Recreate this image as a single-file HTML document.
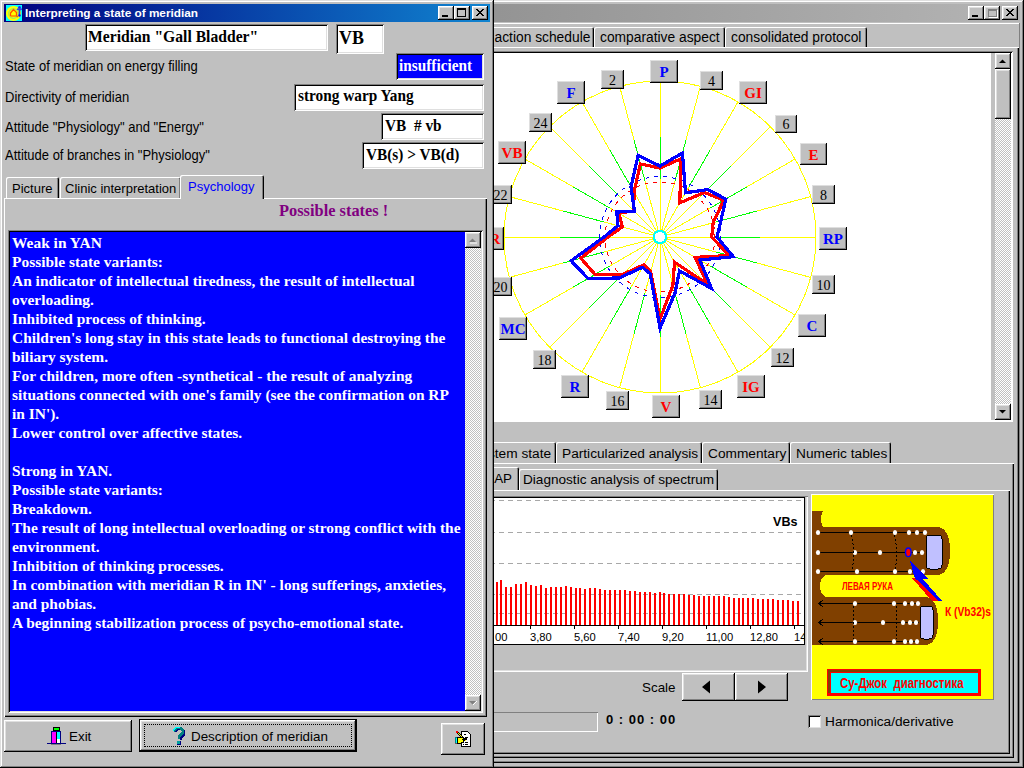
<!DOCTYPE html><html><head><meta charset="utf-8"><style>
*{box-sizing:border-box;margin:0;padding:0}
html,body{width:1024px;height:768px;overflow:hidden;background:#c0c0c0}
body{position:relative;font-family:"Liberation Sans",sans-serif;font-size:13px;color:#000}
.a{position:absolute}
.win{box-shadow:inset -1px -1px #000,inset 1px 1px #dfdfdf,inset -2px -2px #808080,inset 2px 2px #fff;background:#c0c0c0}
.btn{box-shadow:inset -1px -1px #000,inset 1px 1px #fff,inset -2px -2px #808080,inset 2px 2px #dfdfdf;background:#c0c0c0}
.sunk{box-shadow:inset 1px 1px #808080,inset -1px -1px #fff,inset 2px 2px #000,inset -2px -2px #dfdfdf}
.lbl{position:absolute;background:#c0c0c0;box-shadow:inset -1px -1px #000,inset 1px 1px #dfdfdf,inset -2px -2px #808080;text-align:center;font-family:"Liberation Serif",serif}
.lm{font-weight:bold;font-size:15px}
.ln{font-size:14px}
.t{white-space:pre;position:absolute}
.ser{font-family:"Liberation Serif",serif;font-weight:bold}
.tab{position:absolute;box-shadow:inset 1px 1px #fff,inset -1px 0 #000,inset -2px 0 #808080;background:#c0c0c0;border-radius:2px 2px 0 0}
.tbtn{position:absolute;width:16px;height:14px}
</style></head><body>
<div class="a win" style="left:380px;top:0;width:644px;height:768px"></div>
<div class="a" style="left:384px;top:4px;width:636px;height:18px;background:linear-gradient(90deg,#8d8d8d,#b4b4b4)"></div>
<div class="a btn" style="left:968px;top:6px;width:16px;height:14px"></div><div class="a btn" style="left:984px;top:6px;width:16px;height:14px"></div><div class="a btn" style="left:1002px;top:6px;width:16px;height:14px"></div><div class="a" style="left:972px;top:15px;width:6px;height:2px;background:#000"></div><div class="a" style="left:988px;top:9px;width:9px;height:8px;border:1px solid #808080;border-top-width:2px;box-shadow:1px 1px #fff"></div><svg class="a" style="left:1002px;top:6px" width="16" height="14"><path d="M4 3 L11 10 M5 3 L12 10 M11 3 L4 10 M12 3 L5 10" stroke="#000" stroke-width="1" shape-rendering="crispEdges"/></svg>
<div class="a" style="left:494px;top:23px;width:526px;height:1px;background:#fff"></div>
<div class="a" style="left:1019px;top:23px;width:1px;height:740px;background:#808080"></div>
<div class="a" style="left:494px;top:762px;width:526px;height:1px;background:#808080"></div>
<div class="a" style="left:470px;top:47px;width:549px;height:716px;box-shadow:inset 1px 1px #fff,inset -1px -1px #000,inset -2px -2px #808080"></div>
<div class="tab" style="left:480px;top:27px;width:114px;height:20px"></div>
<div class="t" style="left:494.5px;top:30px;font-size:13.8px">action schedule</div>
<div class="tab" style="left:594px;top:27px;width:131px;height:20px"></div>
<div class="t" style="left:600px;top:30px;font-size:13.8px">comparative aspect</div>
<div class="tab" style="left:725px;top:27px;width:142px;height:20px"></div>
<div class="t" style="left:731px;top:30px;font-size:13.8px">consolidated protocol</div>
<div class="a" style="left:470px;top:51px;width:543px;height:371px;background:#fff;box-shadow:inset 1px 1px #808080,inset -1px -1px #fff,inset 2px 2px #000,inset -2px -2px #fff"></div>
<div class="a" style="left:991px;top:53px;width:4px;height:367px;background:#c0c0c0"></div>
<div class="a" style="left:995px;top:53px;width:16px;height:367px;background-color:#e0e0e0;background-image:repeating-conic-gradient(#c0c0c0 0 25%,#fff 0 50%);background-size:2px 2px"></div>
<div class="a btn" style="left:995px;top:53px;width:16px;height:16px"></div>
<svg class="a" style="left:995px;top:53px" width="16" height="16"><path d="M4 10 H11 L7.5 6.5Z" fill="#000"/></svg>
<div class="a btn" style="left:995px;top:69px;width:16px;height:50px"></div>
<div class="a btn" style="left:995px;top:404px;width:16px;height:16px"></div>
<svg class="a" style="left:995px;top:404px" width="16" height="16"><path d="M4 6 H11 L7.5 9.5Z" fill="#000"/></svg>
<svg class="a" style="left:0;top:0" width="1024" height="768" viewBox="0 0 1024 768"><defs><clipPath id="cc"><rect x="472" y="53" width="519" height="367"/></clipPath></defs><g clip-path="url(#cc)" shape-rendering="crispEdges"><path d="M660.00,237.00 L660.00,179.00 M660.00,137.00 L660.00,81.00" stroke="#ffff00" stroke-width="1"/><path d="M660.00,179.00 L660.00,137.00" stroke="#00ff00" stroke-width="1"/><path d="M660.00,237.00 L675.01,180.98 M685.88,140.41 L700.38,86.32" stroke="#ffff00" stroke-width="1"/><path d="M675.01,180.98 L685.88,140.41" stroke="#00ff00" stroke-width="1"/><path d="M660.00,237.00 L689.00,186.77 M710.00,150.40 L738.00,101.90" stroke="#ffff00" stroke-width="1"/><path d="M689.00,186.77 L710.00,150.40" stroke="#00ff00" stroke-width="1"/><path d="M660.00,237.00 L701.01,195.99 M730.71,166.29 L770.31,126.69" stroke="#ffff00" stroke-width="1"/><path d="M701.01,195.99 L730.71,166.29" stroke="#00ff00" stroke-width="1"/><path d="M660.00,237.00 L710.23,208.00 M746.60,187.00 L795.10,159.00" stroke="#ffff00" stroke-width="1"/><path d="M710.23,208.00 L746.60,187.00" stroke="#00ff00" stroke-width="1"/><path d="M660.00,237.00 L716.02,221.99 M756.59,211.12 L810.68,196.62" stroke="#ffff00" stroke-width="1"/><path d="M716.02,221.99 L756.59,211.12" stroke="#00ff00" stroke-width="1"/><path d="M660.00,237.00 L718.00,237.00 M760.00,237.00 L816.00,237.00" stroke="#ffff00" stroke-width="1"/><path d="M718.00,237.00 L760.00,237.00" stroke="#00ff00" stroke-width="1"/><path d="M660.00,237.00 L716.02,252.01 M756.59,262.88 L810.68,277.38" stroke="#ffff00" stroke-width="1"/><path d="M716.02,252.01 L756.59,262.88" stroke="#00ff00" stroke-width="1"/><path d="M660.00,237.00 L710.23,266.00 M746.60,287.00 L795.10,315.00" stroke="#ffff00" stroke-width="1"/><path d="M710.23,266.00 L746.60,287.00" stroke="#00ff00" stroke-width="1"/><path d="M660.00,237.00 L701.01,278.01 M730.71,307.71 L770.31,347.31" stroke="#ffff00" stroke-width="1"/><path d="M701.01,278.01 L730.71,307.71" stroke="#00ff00" stroke-width="1"/><path d="M660.00,237.00 L689.00,287.23 M710.00,323.60 L738.00,372.10" stroke="#ffff00" stroke-width="1"/><path d="M689.00,287.23 L710.00,323.60" stroke="#00ff00" stroke-width="1"/><path d="M660.00,237.00 L675.01,293.02 M685.88,333.59 L700.38,387.68" stroke="#ffff00" stroke-width="1"/><path d="M675.01,293.02 L685.88,333.59" stroke="#00ff00" stroke-width="1"/><path d="M660.00,237.00 L660.00,295.00 M660.00,337.00 L660.00,393.00" stroke="#ffff00" stroke-width="1"/><path d="M660.00,295.00 L660.00,337.00" stroke="#00ff00" stroke-width="1"/><path d="M660.00,237.00 L644.99,293.02 M634.12,333.59 L619.62,387.68" stroke="#ffff00" stroke-width="1"/><path d="M644.99,293.02 L634.12,333.59" stroke="#00ff00" stroke-width="1"/><path d="M660.00,237.00 L631.00,287.23 M610.00,323.60 L582.00,372.10" stroke="#ffff00" stroke-width="1"/><path d="M631.00,287.23 L610.00,323.60" stroke="#00ff00" stroke-width="1"/><path d="M660.00,237.00 L618.99,278.01 M589.29,307.71 L549.69,347.31" stroke="#ffff00" stroke-width="1"/><path d="M618.99,278.01 L589.29,307.71" stroke="#00ff00" stroke-width="1"/><path d="M660.00,237.00 L609.77,266.00 M573.40,287.00 L524.90,315.00" stroke="#ffff00" stroke-width="1"/><path d="M609.77,266.00 L573.40,287.00" stroke="#00ff00" stroke-width="1"/><path d="M660.00,237.00 L603.98,252.01 M563.41,262.88 L509.32,277.38" stroke="#ffff00" stroke-width="1"/><path d="M603.98,252.01 L563.41,262.88" stroke="#00ff00" stroke-width="1"/><path d="M660.00,237.00 L602.00,237.00 M560.00,237.00 L504.00,237.00" stroke="#ffff00" stroke-width="1"/><path d="M602.00,237.00 L560.00,237.00" stroke="#00ff00" stroke-width="1"/><path d="M660.00,237.00 L603.98,221.99 M563.41,211.12 L509.32,196.62" stroke="#ffff00" stroke-width="1"/><path d="M603.98,221.99 L563.41,211.12" stroke="#00ff00" stroke-width="1"/><path d="M660.00,237.00 L609.77,208.00 M573.40,187.00 L524.90,159.00" stroke="#ffff00" stroke-width="1"/><path d="M609.77,208.00 L573.40,187.00" stroke="#00ff00" stroke-width="1"/><path d="M660.00,237.00 L618.99,195.99 M589.29,166.29 L549.69,126.69" stroke="#ffff00" stroke-width="1"/><path d="M618.99,195.99 L589.29,166.29" stroke="#00ff00" stroke-width="1"/><path d="M660.00,237.00 L631.00,186.77 M610.00,150.40 L582.00,101.90" stroke="#ffff00" stroke-width="1"/><path d="M631.00,186.77 L610.00,150.40" stroke="#00ff00" stroke-width="1"/><path d="M660.00,237.00 L644.99,180.98 M634.12,140.41 L619.62,86.32" stroke="#ffff00" stroke-width="1"/><path d="M644.99,180.98 L634.12,140.41" stroke="#00ff00" stroke-width="1"/><circle cx="660" cy="237" r="156" fill="none" stroke="#ffff00" stroke-width="1"/><circle cx="660" cy="237" r="60.5" fill="none" stroke="#0000ff" stroke-width="1" stroke-dasharray="4 5"/><circle cx="660" cy="237" r="55" fill="none" stroke="#ff0000" stroke-width="1" stroke-dasharray="4 5"/><polygon points="660.0,168.0 681.0,158.8 679.8,202.8 704.5,192.5 723.7,200.2 713.1,222.8 711.7,237.0 729.1,255.5 695.2,257.4 707.4,284.4 674.5,262.1 672.9,285.3 660.0,319.0 650.7,271.8 644.0,264.7 622.5,274.5 595.0,274.5 580.8,258.2 608.0,237.0 622.3,226.9 618.9,213.2 633.8,210.8 634.0,192.0 640.4,164.0" fill="none" stroke="#ff0000" stroke-width="3.2" stroke-linejoin="miter"/><polygon points="660.0,166.0 682.5,153.0 685.5,192.8 707.4,189.6 725.8,199.0 720.9,220.7 717.0,237.0 733.4,256.7 699.8,260.0 711.6,288.6 679.5,270.8 675.0,293.0 660.0,328.0 650.2,273.7 642.5,267.3 619.0,278.0 588.1,278.5 571.1,260.8 604.0,237.0 618.0,225.7 616.7,212.0 634.5,211.5 631.0,186.8 638.1,155.4" fill="none" stroke="#0000ff" stroke-width="3.2" stroke-linejoin="miter"/><circle cx="660" cy="237" r="6.3" fill="#fff" stroke="#00ffff" stroke-width="2.2"/></g></svg>
<div class="lbl lm" style="left:650px;top:60px;width:28px;height:23px;line-height:25px;color:#0000ff">P</div>
<div class="lbl ln" style="left:700px;top:71px;width:23px;height:19px;line-height:21px;color:#000">4</div>
<div class="lbl lm" style="left:739px;top:81px;width:28px;height:23px;line-height:25px;color:#ff0000">GI</div>
<div class="lbl ln" style="left:775px;top:115px;width:22px;height:18px;line-height:20px;color:#000">6</div>
<div class="lbl lm" style="left:800px;top:143px;width:27px;height:22px;line-height:24px;color:#ff0000">E</div>
<div class="lbl ln" style="left:812px;top:185px;width:23px;height:19px;line-height:21px;color:#000">8</div>
<div class="lbl lm" style="left:819px;top:227px;width:28px;height:23px;line-height:25px;color:#0000ff">RP</div>
<div class="lbl ln" style="left:812px;top:275px;width:23px;height:19px;line-height:21px;color:#000">10</div>
<div class="lbl lm" style="left:798px;top:314px;width:28px;height:23px;line-height:25px;color:#0000ff">C</div>
<div class="lbl ln" style="left:771px;top:348px;width:23px;height:19px;line-height:21px;color:#000">12</div>
<div class="lbl lm" style="left:737px;top:375px;width:28px;height:23px;line-height:25px;color:#ff0000">IG</div>
<div class="lbl ln" style="left:699px;top:390px;width:23px;height:19px;line-height:21px;color:#000">14</div>
<div class="lbl lm" style="left:652px;top:395px;width:28px;height:23px;line-height:25px;color:#ff0000">V</div>
<div class="lbl ln" style="left:606px;top:391px;width:23px;height:19px;line-height:21px;color:#000">16</div>
<div class="lbl lm" style="left:561px;top:375px;width:28px;height:23px;line-height:25px;color:#0000ff">R</div>
<div class="lbl ln" style="left:533px;top:350px;width:23px;height:19px;line-height:21px;color:#000">18</div>
<div class="lbl lm" style="left:499px;top:317px;width:28px;height:23px;line-height:25px;color:#0000ff">MC</div>
<div class="lbl ln" style="left:489px;top:277px;width:23px;height:19px;line-height:21px;color:#000">20</div>
<div class="lbl lm" style="left:476px;top:227px;width:28px;height:23px;line-height:25px;color:#ff0000">TR</div>
<div class="lbl ln" style="left:489px;top:185px;width:23px;height:19px;line-height:21px;color:#000">22</div>
<div class="lbl lm" style="left:498px;top:141px;width:28px;height:23px;line-height:25px;color:#ff0000">VB</div>
<div class="lbl ln" style="left:529px;top:113px;width:23px;height:19px;line-height:21px;color:#000">24</div>
<div class="lbl lm" style="left:557px;top:81px;width:28px;height:23px;line-height:25px;color:#0000ff">F</div>
<div class="lbl ln" style="left:601px;top:70px;width:23px;height:19px;line-height:21px;color:#000">2</div>
<div class="a" style="left:470px;top:420px;width:542px;height:1px;background:#fff"></div>
<div class="tab" style="left:440px;top:442px;width:116px;height:21px"></div>
<div class="tab" style="left:556px;top:442px;width:146px;height:21px"></div>
<div class="tab" style="left:702px;top:442px;width:88px;height:21px"></div>
<div class="tab" style="left:790px;top:442px;width:101px;height:21px"></div>

<div class="t" style="left:472px;top:446px;font-size:13.7px">System state</div>
<div class="t" style="left:562px;top:446px;font-size:13.7px">Particularized analysis</div>
<div class="t" style="left:708px;top:446px;font-size:13.7px">Commentary</div>
<div class="t" style="left:796px;top:446px;font-size:13.7px">Numeric tables</div>
<div class="tab" style="left:440px;top:467px;width:79px;height:24px"></div>
<div class="tab" style="left:519px;top:469px;width:199px;height:21px"></div>
<div class="t" style="left:484.5px;top:471px;font-size:13.4px">RAP</div>
<div class="t" style="left:523px;top:472px;font-size:13.6px">Diagnostic analysis of spectrum</div>
<div class="a" style="left:470px;top:463px;width:544px;height:295px;box-shadow:inset 1px 1px #fff,inset -1px -1px #000,inset -2px -2px #808080"></div><div class="a" style="left:470px;top:490px;width:540px;height:264px;box-shadow:inset 1px 1px #fff,inset -1px -1px #000,inset -2px -2px #808080"></div>
<div class="a" style="left:470px;top:496px;width:338px;height:176px;box-shadow:inset 1px 1px #808080,inset -1px -1px #fff,inset -2px -2px #dfdfdf"></div>
<div class="a" style="left:470px;top:497px;width:335px;height:148px;background:#fff;border:1px solid #000;border-width:1px 1px 1px 1px"></div>
<svg class="a" style="left:0;top:0" width="1024" height="768"><g shape-rendering="crispEdges"><line x1="472" y1="500.5" x2="804" y2="500.5" stroke="#a8a8a8" stroke-dasharray="5 4"/><line x1="472" y1="532.5" x2="804" y2="532.5" stroke="#a8a8a8" stroke-dasharray="5 4"/><line x1="472" y1="563.5" x2="804" y2="563.5" stroke="#a8a8a8" stroke-dasharray="5 4"/><line x1="472" y1="594.5" x2="804" y2="594.5" stroke="#a8a8a8" stroke-dasharray="5 4"/><line x1="472" y1="613.5" x2="804" y2="613.5" stroke="#a8a8a8" stroke-dasharray="5 4"/><rect x="496" y="582" width="2" height="43" fill="#ff0000"/><rect x="500" y="580" width="2" height="45" fill="#ff0000"/><rect x="505" y="587" width="2" height="38" fill="#ff0000"/><rect x="510" y="587" width="2" height="38" fill="#ff0000"/><rect x="515" y="584" width="2" height="41" fill="#ff0000"/><rect x="520" y="584" width="2" height="41" fill="#ff0000"/><rect x="525" y="582" width="2" height="43" fill="#ff0000"/><rect x="530" y="585" width="2" height="40" fill="#ff0000"/><rect x="535" y="586" width="2" height="39" fill="#ff0000"/><rect x="540" y="585" width="2" height="40" fill="#ff0000"/><rect x="545" y="588" width="2" height="37" fill="#ff0000"/><rect x="550" y="587" width="2" height="38" fill="#ff0000"/><rect x="555" y="587" width="2" height="38" fill="#ff0000"/><rect x="560" y="587" width="2" height="38" fill="#ff0000"/><rect x="565" y="586" width="2" height="39" fill="#ff0000"/><rect x="570" y="587" width="2" height="38" fill="#ff0000"/><rect x="575" y="588" width="2" height="37" fill="#ff0000"/><rect x="579" y="588" width="2" height="37" fill="#ff0000"/><rect x="584" y="589" width="2" height="36" fill="#ff0000"/><rect x="589" y="588" width="2" height="37" fill="#ff0000"/><rect x="594" y="588" width="2" height="37" fill="#ff0000"/><rect x="599" y="589" width="2" height="36" fill="#ff0000"/><rect x="604" y="590" width="2" height="35" fill="#ff0000"/><rect x="609" y="590" width="2" height="35" fill="#ff0000"/><rect x="614" y="590" width="2" height="35" fill="#ff0000"/><rect x="619" y="590" width="2" height="35" fill="#ff0000"/><rect x="624" y="590" width="2" height="35" fill="#ff0000"/><rect x="629" y="591" width="2" height="34" fill="#ff0000"/><rect x="634" y="591" width="2" height="34" fill="#ff0000"/><rect x="639" y="592" width="2" height="33" fill="#ff0000"/><rect x="644" y="592" width="2" height="33" fill="#ff0000"/><rect x="649" y="592" width="2" height="33" fill="#ff0000"/><rect x="654" y="593" width="2" height="32" fill="#ff0000"/><rect x="659" y="592" width="2" height="33" fill="#ff0000"/><rect x="663" y="593" width="2" height="32" fill="#ff0000"/><rect x="668" y="594" width="2" height="31" fill="#ff0000"/><rect x="673" y="594" width="2" height="31" fill="#ff0000"/><rect x="678" y="594" width="2" height="31" fill="#ff0000"/><rect x="683" y="594" width="2" height="31" fill="#ff0000"/><rect x="688" y="595" width="2" height="30" fill="#ff0000"/><rect x="693" y="595" width="2" height="30" fill="#ff0000"/><rect x="698" y="596" width="2" height="29" fill="#ff0000"/><rect x="703" y="596" width="2" height="29" fill="#ff0000"/><rect x="708" y="596" width="2" height="29" fill="#ff0000"/><rect x="713" y="596" width="2" height="29" fill="#ff0000"/><rect x="718" y="596" width="2" height="29" fill="#ff0000"/><rect x="723" y="596" width="2" height="29" fill="#ff0000"/><rect x="728" y="597" width="2" height="28" fill="#ff0000"/><rect x="733" y="598" width="2" height="27" fill="#ff0000"/><rect x="738" y="598" width="2" height="27" fill="#ff0000"/><rect x="742" y="598" width="2" height="27" fill="#ff0000"/><rect x="747" y="598" width="2" height="27" fill="#ff0000"/><rect x="752" y="598" width="2" height="27" fill="#ff0000"/><rect x="757" y="599" width="2" height="26" fill="#ff0000"/><rect x="762" y="599" width="2" height="26" fill="#ff0000"/><rect x="767" y="599" width="2" height="26" fill="#ff0000"/><rect x="772" y="599" width="2" height="26" fill="#ff0000"/><rect x="777" y="600" width="2" height="25" fill="#ff0000"/><rect x="782" y="600" width="2" height="25" fill="#ff0000"/><rect x="787" y="600" width="2" height="25" fill="#ff0000"/><rect x="792" y="601" width="2" height="24" fill="#ff0000"/><rect x="797" y="601" width="2" height="24" fill="#ff0000"/><line x1="472" y1="625.5" x2="804" y2="625.5" stroke="#000"/><line x1="486.5" y1="625" x2="486.5" y2="629" stroke="#000"/><line x1="530.5" y1="625" x2="530.5" y2="629" stroke="#000"/><line x1="574.5" y1="625" x2="574.5" y2="629" stroke="#000"/><line x1="618.5" y1="625" x2="618.5" y2="629" stroke="#000"/><line x1="662.5" y1="625" x2="662.5" y2="629" stroke="#000"/><line x1="706.5" y1="625" x2="706.5" y2="629" stroke="#000"/><line x1="750.5" y1="625" x2="750.5" y2="629" stroke="#000"/><line x1="794.5" y1="625" x2="794.5" y2="629" stroke="#000"/></g></svg>
<div class="a" style="left:470px;top:630px;width:334px;height:14px;overflow:hidden">
<div class="t" style="left:25px;top:0;font-size:11.2px;line-height:14px">00</div>
<div class="t" style="left:60px;top:0;font-size:11.2px;line-height:14px">3,80</div>
<div class="t" style="left:104px;top:0;font-size:11.2px;line-height:14px">5,60</div>
<div class="t" style="left:148px;top:0;font-size:11.2px;line-height:14px">7,40</div>
<div class="t" style="left:192px;top:0;font-size:11.2px;line-height:14px">9,20</div>
<div class="t" style="left:236px;top:0;font-size:11.2px;line-height:14px">11,00</div>
<div class="t" style="left:280px;top:0;font-size:11.2px;line-height:14px">12,80</div>
<div class="t" style="left:324px;top:0;font-size:11.2px;line-height:14px">14,60</div>
</div>
<div class="t" style="left:773px;top:514.5px;font-size:12.6px;font-weight:bold">VBs</div>
<div class="a" style="left:811px;top:494px;width:183px;height:206px;background:#ffff00;box-shadow:inset 1px 1px #fff,inset -1px -1px #808080"></div>
<svg class="a" style="left:812px;top:495px" width="181" height="204" viewBox="812 495 181 204" shape-rendering="crispEdges"><path d="M812 511 H823 Q819 519 823 527 H939 Q950 530 950 551 Q950 572 939 575 H826 Q820 578 820 586 Q820 594 826 597 H927 Q938 600 938 621 Q938 642 927 645 H812 Z" fill="#804000"/><rect x="926" y="535" width="16" height="34" rx="4" fill="#c0c0ff" stroke="#000" stroke-width="1"/><rect x="920" y="606" width="13" height="33" rx="4" fill="#c0c0ff" stroke="#000" stroke-width="1"/><line x1="818" y1="532.5" x2="924" y2="532.5" stroke="#000" stroke-width="1"/><line x1="818" y1="552.5" x2="924" y2="552.5" stroke="#000" stroke-width="1"/><line x1="818" y1="571.5" x2="924" y2="571.5" stroke="#000" stroke-width="1"/><line x1="818" y1="603.5" x2="919" y2="603.5" stroke="#000" stroke-width="1"/><path d="M818 603.5 l5 -3 M818 603.5 l5 3" stroke="#000"/><line x1="818" y1="622.5" x2="919" y2="622.5" stroke="#000" stroke-width="1"/><path d="M818 622.5 l5 -3 M818 622.5 l5 3" stroke="#000"/><line x1="818" y1="641.5" x2="919" y2="641.5" stroke="#000" stroke-width="1"/><path d="M818 641.5 l5 -3 M818 641.5 l5 3" stroke="#000"/><ellipse cx="818" cy="532.5" rx="2.1" ry="2.6" fill="#fff" shape-rendering="auto"/><ellipse cx="851" cy="532.5" rx="2.1" ry="2.6" fill="#fff" shape-rendering="auto"/><ellipse cx="895" cy="532.5" rx="2.1" ry="2.6" fill="#fff" shape-rendering="auto"/><ellipse cx="909" cy="532.5" rx="2.1" ry="2.6" fill="#fff" shape-rendering="auto"/><ellipse cx="917" cy="532.5" rx="2.1" ry="2.6" fill="#fff" shape-rendering="auto"/><ellipse cx="925" cy="532.5" rx="2.1" ry="2.6" fill="#fff" shape-rendering="auto"/><ellipse cx="818" cy="552.5" rx="2.1" ry="2.6" fill="#fff" shape-rendering="auto"/><ellipse cx="855" cy="552.5" rx="2.1" ry="2.6" fill="#fff" shape-rendering="auto"/><ellipse cx="880" cy="552.5" rx="2.1" ry="2.6" fill="#fff" shape-rendering="auto"/><ellipse cx="915" cy="552.5" rx="2.1" ry="2.6" fill="#fff" shape-rendering="auto"/><ellipse cx="922" cy="552.5" rx="2.1" ry="2.6" fill="#fff" shape-rendering="auto"/><ellipse cx="818" cy="571.5" rx="2.1" ry="2.6" fill="#fff" shape-rendering="auto"/><ellipse cx="857" cy="571.5" rx="2.1" ry="2.6" fill="#fff" shape-rendering="auto"/><ellipse cx="895" cy="571.5" rx="2.1" ry="2.6" fill="#fff" shape-rendering="auto"/><ellipse cx="910" cy="571.5" rx="2.1" ry="2.6" fill="#fff" shape-rendering="auto"/><ellipse cx="923" cy="571.5" rx="2.1" ry="2.6" fill="#fff" shape-rendering="auto"/><ellipse cx="855" cy="603.5" rx="2.1" ry="2.6" fill="#fff" shape-rendering="auto"/><ellipse cx="894" cy="603.5" rx="2.1" ry="2.6" fill="#fff" shape-rendering="auto"/><ellipse cx="905" cy="603.5" rx="2.1" ry="2.6" fill="#fff" shape-rendering="auto"/><ellipse cx="912" cy="603.5" rx="2.1" ry="2.6" fill="#fff" shape-rendering="auto"/><ellipse cx="918" cy="603.5" rx="2.1" ry="2.6" fill="#fff" shape-rendering="auto"/><ellipse cx="855" cy="622.5" rx="2.1" ry="2.6" fill="#fff" shape-rendering="auto"/><ellipse cx="883" cy="622.5" rx="2.1" ry="2.6" fill="#fff" shape-rendering="auto"/><ellipse cx="903" cy="622.5" rx="2.1" ry="2.6" fill="#fff" shape-rendering="auto"/><ellipse cx="910" cy="622.5" rx="2.1" ry="2.6" fill="#fff" shape-rendering="auto"/><ellipse cx="916" cy="622.5" rx="2.1" ry="2.6" fill="#fff" shape-rendering="auto"/><ellipse cx="855" cy="641.5" rx="2.1" ry="2.6" fill="#fff" shape-rendering="auto"/><ellipse cx="894" cy="641.5" rx="2.1" ry="2.6" fill="#fff" shape-rendering="auto"/><ellipse cx="905" cy="641.5" rx="2.1" ry="2.6" fill="#fff" shape-rendering="auto"/><ellipse cx="911" cy="641.5" rx="2.1" ry="2.6" fill="#fff" shape-rendering="auto"/><ellipse cx="917" cy="641.5" rx="2.1" ry="2.6" fill="#fff" shape-rendering="auto"/><path d="M851 535 Q856 552 852 569" stroke="#000" fill="none" stroke-dasharray="2 2"/><path d="M853 606 Q855 622 853 639" stroke="#000" fill="none" stroke-dasharray="2 2"/><path d="M894 535 Q899 552 895 569" stroke="#000" fill="none" stroke-dasharray="2 2"/><path d="M896 606 Q898 622 896 639" stroke="#000" fill="none" stroke-dasharray="2 2"/><ellipse cx="908.3" cy="552.3" rx="2.8" ry="4.3" fill="#ff0000" stroke="#0000ff" stroke-width="1.4" shape-rendering="auto"/><path d="M912 578 L921 579 L939 601 L932 601Z" fill="#ff0000"/><path d="M910 561 L929 579 L923 579 L942 601 L938 601 L919 581 L915 579Z" fill="#0000ff"/></svg>
<div class="t" style="left:842px;top:581px;font-size:10px;font-weight:bold;color:#ff0000;transform:scaleX(0.8);transform-origin:0 0;line-height:11px">ЛЕВАЯ РУКА</div>
<div class="t" style="left:945px;top:605px;font-size:12px;font-weight:bold;color:#ff0000;transform:scaleX(0.85);transform-origin:0 0;line-height:14px">К (Vb32)s</div>
<div class="a" style="left:827px;top:669px;width:154px;height:27px;background:#00ffff;border:solid #ff0000;border-width:1px 3px 3px 1px;box-shadow:inset 2px 2px #804000,inset 3px 3px #ff0000"></div>
<div class="t" style="left:840px;top:675px;font-size:14px;font-weight:bold;color:#ff0000;transform:scaleX(0.816);transform-origin:0 0;line-height:16px">Су-Джок  диагностика</div>
<div class="a" style="left:470px;top:671px;width:338px;height:1px;background:#fff"></div>
<div class="t" style="left:642px;top:680px;font-size:13.4px">Scale</div>
<div class="a btn" style="left:682px;top:673px;width:53px;height:28px"></div>
<div class="a btn" style="left:735px;top:673px;width:53px;height:28px"></div>
<svg class="a" style="left:682px;top:673px" width="106" height="28"><path d="M20 14 L28 7.5 V20.5Z M84 14 L76 7.5 V20.5Z" fill="#000"/></svg>
<div class="a" style="left:470px;top:712px;width:128px;height:20px;box-shadow:inset 1px 1px #808080,inset -1px -1px #fff"></div>
<div class="t" style="left:606px;top:712px;font-size:13px;font-weight:bold;letter-spacing:1px">0 : 00 : 00</div>
<div class="a" style="left:808px;top:715px;width:13px;height:13px;background:#fff;box-shadow:inset 1px 1px #808080,inset -1px -1px #dfdfdf,inset 2px 2px #000"></div>
<div class="t" style="left:825px;top:714px;font-size:13.7px">Harmonica/derivative</div>
<div class="a win" style="left:0;top:0;width:494px;height:768px"></div>
<div class="a" style="left:4px;top:4px;width:486px;height:18px;background:linear-gradient(90deg,#000080,#1084d0)"></div>
<svg class="a" style="left:6px;top:5px" width="16" height="16"><rect width="16" height="16" fill="#00ffff"/><circle cx="7.5" cy="8.5" r="7.5" fill="#ffff00"/><circle cx="7.5" cy="8.5" r="4.8" fill="none" stroke="#80e080" stroke-width="1"/><path d="M4.5 11 L4.5 8 L7.5 4.5 L10.5 7.5 L10.5 11 L12 12" fill="none" stroke="#ff5000" stroke-width="1.3"/><path d="M4.5 11 H10" stroke="#ff6000" stroke-width="1.2"/><circle cx="13.5" cy="2.5" r="1.5" fill="#2020ff"/><path d="M13.5 3 V10 M11 4 L13.5 5 L16 4" stroke="#3040e0" stroke-width="1.6" fill="none"/><circle cx="13.5" cy="10.5" r="1.2" fill="#0000ff"/></svg>
<div class="t" style="left:25px;top:6px;font-size:11.8px;font-weight:bold;color:#fff;line-height:14px">Interpreting a state of meridian</div>
<div class="a btn" style="left:438px;top:6px;width:16px;height:14px"></div><div class="a btn" style="left:454px;top:6px;width:16px;height:14px"></div><div class="a btn" style="left:472px;top:6px;width:16px;height:14px"></div><div class="a" style="left:442px;top:15px;width:6px;height:2px;background:#000"></div><div class="a" style="left:457px;top:8px;width:9px;height:9px;border:1px solid #000;border-top-width:2px"></div><svg class="a" style="left:472px;top:6px" width="16" height="14"><path d="M4 3 L11 10 M5 3 L12 10 M11 3 L4 10 M12 3 L5 10" stroke="#000" stroke-width="1" shape-rendering="crispEdges"/></svg>
<div class="a sunk" style="left:85px;top:24px;width:243px;height:27px;background:#fff"></div>
<div class="t ser" style="left:88px;top:28px;font-size:16.3px;color:#000;line-height:18px;transform:scaleX(0.96);transform-origin:0 0">Meridian "Gall Bladder"</div>
<div class="a sunk" style="left:336px;top:24px;width:48px;height:30px;background:#fff"></div>
<div class="t ser" style="left:339px;top:29px;font-size:18.5px;color:#000;line-height:18px;transform:scaleX(0.97);transform-origin:0 0">VB</div>
<div class="a" style="left:396px;top:53px;width:88px;height:27px;background:#0000ff;box-shadow:inset 1px 1px #808080,inset -1px -1px #fff,inset 2px 2px #000,inset -2px -2px #dfdfdf"></div>
<div class="t ser" style="left:399px;top:56.5px;font-size:15.8px;color:#fff;line-height:18px;transform:scaleX(0.97);transform-origin:0 0">insufficient</div>
<div class="a sunk" style="left:294px;top:84px;width:190px;height:27px;background:#fff"></div>
<div class="t ser" style="left:298px;top:87px;font-size:16.3px;color:#000;line-height:18px;transform:scaleX(0.94);transform-origin:0 0">strong warp Yang</div>
<div class="a sunk" style="left:381px;top:113px;width:103px;height:27px;background:#fff"></div>
<div class="t ser" style="left:385px;top:117px;font-size:16.3px;color:#000;line-height:18px;transform:scaleX(0.94);transform-origin:0 0">VB  # vb</div>
<div class="a sunk" style="left:362px;top:142px;width:122px;height:27px;background:#fff"></div>
<div class="t ser" style="left:366px;top:146px;font-size:16.3px;color:#000;line-height:18px;transform:scaleX(0.94);transform-origin:0 0">VB(s) &gt; VB(d)</div>
<div class="t" style="left:5px;top:59px;font-size:13.9px;line-height:15px;transform:scaleX(0.935);transform-origin:0 0">State of meridian on energy filling</div>
<div class="t" style="left:5px;top:90px;font-size:13.9px;line-height:15px;transform:scaleX(0.935);transform-origin:0 0">Directivity of meridian</div>
<div class="t" style="left:5px;top:120px;font-size:13.9px;line-height:15px;transform:scaleX(0.935);transform-origin:0 0">Attitude "Physiology" and "Energy"</div>
<div class="t" style="left:5px;top:148px;font-size:13.9px;line-height:15px;transform:scaleX(0.935);transform-origin:0 0">Attitude of branches in "Physiology"</div>
<div class="a" style="left:4px;top:198px;width:483px;height:519px;box-shadow:inset 1px 1px #fff,inset -1px -1px #000,inset -2px -2px #808080"></div>
<div class="tab" style="left:6px;top:177px;width:53px;height:21px"></div>
<div class="tab" style="left:60px;top:177px;width:121px;height:21px"></div>
<div class="tab" style="left:180px;top:175px;width:84px;height:24px;background:#c0c0c0"></div>
<div class="t" style="left:12px;top:181px;font-size:13px">Picture</div>
<div class="t" style="left:65px;top:181px;font-size:13px">Clinic interpretation</div>
<div class="t" style="left:188px;top:179px;font-size:13px;color:#0000ff">Psychology</div>
<div class="t ser" style="left:279px;top:202px;font-size:16.4px;color:#800080;line-height:18px">Possible states !</div>
<div class="a sunk" style="left:8px;top:230px;width:475px;height:483px;background:#0000ff"></div>
<div class="a ser" style="left:12px;top:233px;font-size:15.45px;line-height:19px;color:#fff;white-space:pre">Weak in YAN
Possible state variants:
An indicator of intellectual tiredness, the result of intellectual
overloading.
Inhibited process of thinking.
Children's long stay in this state leads to functional destroying the
biliary system.
For children, more often -synthetical - the result of analyzing
situations connected with one's family (see the confirmation on RP
in IN').
Lower control over affective states.

Strong in YAN.
Possible state variants:
Breakdown.
The result of long intellectual overloading or strong conflict with the
environment.
Inhibition of thinking processes.
In combination with meridian R in IN' - long sufferings, anxieties,
and phobias.
A beginning stabilization process of psycho-emotional state.</div>
<div class="a" style="left:465px;top:232px;width:16px;height:479px;background-image:repeating-conic-gradient(#c0c0c0 0 25%,#fff 0 50%);background-size:2px 2px"></div>
<div class="a btn" style="left:465px;top:232px;width:16px;height:16px"></div>
<svg class="a" style="left:465px;top:232px" width="16" height="16"><path d="M4 10 H11 L7.5 6.5Z" fill="#808080"/><path d="M5 11 H12" stroke="#fff"/></svg>
<div class="a btn" style="left:465px;top:695px;width:16px;height:16px"></div>
<svg class="a" style="left:465px;top:695px" width="16" height="16"><path d="M4 6 H11 L7.5 9.5Z" fill="#808080"/><path d="M8 10 L12 6" stroke="#fff"/></svg>
<div class="a btn" style="left:4px;top:720px;width:128px;height:32px"></div>
<svg class="a" style="left:47px;top:726px" width="19" height="19" shape-rendering="crispEdges"><rect x="6" y="1" width="7" height="4" fill="#000"/><rect x="7" y="2" width="5" height="2" fill="#00ff00"/><rect x="4" y="5" width="10" height="13" fill="#000080"/><rect x="5" y="6" width="4" height="11" fill="#ff00ff"/><rect x="9" y="6" width="1" height="11" fill="#000"/><rect x="10" y="6" width="3" height="7" fill="#00ffff"/><rect x="10" y="13" width="3" height="4" fill="#fff"/><rect x="0" y="17" width="19" height="1" fill="#000080"/><rect x="4" y="18" width="10" height="1" fill="#808080"/></svg>
<div class="t" style="left:69px;top:729px;font-size:13.4px">Exit</div>
<div class="a" style="left:139px;top:719px;width:218px;height:33px;border:1px solid #000"><div class="a btn" style="left:0;top:0;width:216px;height:31px"></div><div class="a" style="left:4px;top:4px;width:208px;height:23px;border:1px dotted #000"></div></div>
<svg class="a" style="left:172px;top:727px" width="13" height="19" shape-rendering="crispEdges"><path d="M2 4 L5 1 H9 L12 4 V6 L8 10 V12" fill="none" stroke="#000080" stroke-width="2.5" transform="translate(0.8,0.8)"/><path d="M1.5 4 L4.5 1 H8.5 L11 3.5 V5.5 L7 9.5 V11.5" fill="none" stroke="#008080" stroke-width="2.6"/><path d="M1 3.5 L4 0.8 H8" fill="none" stroke="#00ffff" stroke-width="1.3"/><rect x="5" y="14" width="4" height="4" fill="#000080"/><rect x="4.5" y="13.5" width="3.5" height="3.5" fill="#00a0a0"/></svg>
<div class="t" style="left:191px;top:729px;font-size:13.4px">Description of meridian</div>
<div class="a btn" style="left:441px;top:723px;width:44px;height:32px"></div>
<svg class="a" style="left:454px;top:730px" width="18" height="18" shape-rendering="crispEdges"><path d="M7.5 1.5 H13.5 L16.5 4.5 V16.5 H7.5Z" fill="#fff" stroke="#000" stroke-width="1"/><path d="M10 4 H12 M11 7 H14 M11 12 H14 M9 14 H10 M11 14 H14" stroke="#000" stroke-width="1"/><path d="M2.5 1.5 L12 11" stroke="#000" stroke-width="2"/><path d="M3 2 L12 11" stroke="#ffff00" stroke-width="1"/><rect x="2" y="1" width="2" height="2" fill="#ff0000"/><path d="M3 7 H7 L9 8 H12 V9 H8 L9 10 V12 H7 V13 H5 H3Z" fill="#ffff00" stroke="#000" stroke-width="1"/><rect x="1" y="7" width="2" height="6" fill="#00ffff" stroke="#000" stroke-width=".5"/></svg>
</body></html>
